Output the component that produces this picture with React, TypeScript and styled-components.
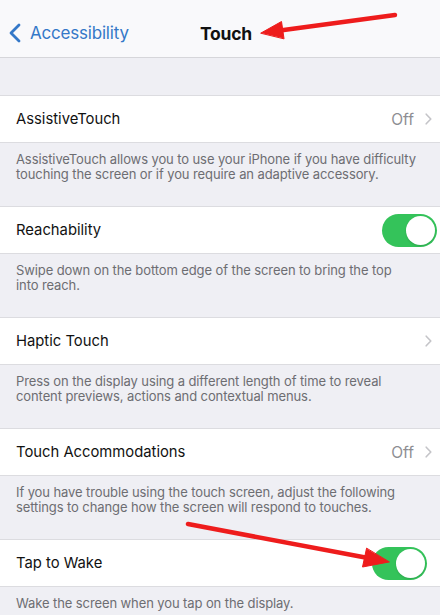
import React from "react";
import styled, { createGlobalStyle } from "styled-components";

const GlobalStyle = createGlobalStyle`
  html, body {
    margin: 0;
    padding: 0;
    background: #efeff4;
  }
  body {
    font-family: Inter, "Liberation Sans", Arial, sans-serif;
    -webkit-font-smoothing: antialiased;
  }
`;

const Screen = styled.div`
  position: relative;
  width: 440px;
  height: 615px;
  overflow: hidden;
  background: #efeff4;
`;

const NavBar = styled.header`
  box-sizing: border-box;
  display: grid;
  grid-template-columns: 1fr auto 1fr;
  align-items: center;
  height: 58px;
  padding-top: 9px;
  background: #f9f9fb;
  border-bottom: 1px solid #d6d6da;
`;

const BackButton = styled.div`
  display: flex;
  align-items: center;
  gap: 9px;
  padding-left: 8px;
  color: #3478c8;
  font-size: 17px;
  letter-spacing: -0.2px;
`;

const Title = styled.h1`
  margin: 0 0 0 12px;
  font-size: 17.5px;
  font-weight: 700;
  color: #111;
  letter-spacing: -0.2px;
`;

const Content = styled.main`
  padding-top: 37px;
`;

const Row = styled.div`
  display: flex;
  align-items: center;
  height: 46px;
  padding-left: 16px;
  background: #fff;
  border-top: 1px solid #dcdce0;
  border-bottom: 1px solid #dcdce0;
`;

const Label = styled.span`
  flex: 1;
  font-size: 14.8px;
  color: #111;
`;

const Detail = styled.span`
  display: flex;
  align-items: center;
  gap: 11px;
  padding-right: 8px;
  font-size: 15.5px;
  color: #8e8e93;
`;

const Footer = styled.p`
  box-sizing: border-box;
  height: 63px;
  margin: 0;
  padding: 9px 23px 0 16px;
  font-size: 13px;
  line-height: 15px;
  letter-spacing: -0.1px;
  color: #6d6d72;
`;

const Track = styled.div<{ $inset: number }>`
  position: relative;
  width: 55px;
  height: 33px;
  margin-right: ${(p) => p.$inset}px;
  border-radius: 17px;
  background: #34c35a;
`;

const Knob = styled.div`
  position: absolute;
  top: 2px;
  right: 2px;
  width: 29px;
  height: 29px;
  border-radius: 50%;
  background: #fff;
  box-shadow: 0 1px 2px rgba(0, 0, 0, 0.15);
`;

const Overlay = styled.svg`
  position: absolute;
  inset: 0;
  pointer-events: none;
`;

const BackChevron = () => (
  <svg width="13" height="20" viewBox="0 0 13 20">
    <path
      d="M11 2 L3 10 L11 18"
      fill="none"
      stroke="#3478c8"
      strokeWidth="2.8"
      strokeLinecap="round"
      strokeLinejoin="round"
    />
  </svg>
);

const Chevron = () => (
  <svg width="7" height="12" viewBox="0 0 7 12">
    <path
      d="M1.2 1.2 L5.8 6 L1.2 10.8"
      fill="none"
      stroke="#c4c4c8"
      strokeWidth="1.6"
      strokeLinecap="round"
      strokeLinejoin="round"
    />
  </svg>
);

const Toggle = ({ inset }: { inset: number }) => (
  <Track $inset={inset}>
    <Knob />
  </Track>
);

type Setting = {
  label: string;
  footer: string;
  value?: string;
  toggle?: number;
};

const settings: Setting[] = [
  {
    label: "AssistiveTouch",
    value: "Off",
    footer:
      "AssistiveTouch allows you to use your iPhone if you have difficulty touching the screen or if you require an adaptive accessory.",
  },
  {
    label: "Reachability",
    toggle: 3,
    footer:
      "Swipe down on the bottom edge of the screen to bring the top into reach.",
  },
  {
    label: "Haptic Touch",
    value: "",
    footer:
      "Press on the display using a different length of time to reveal content previews, actions and contextual menus.",
  },
  {
    label: "Touch Accommodations",
    value: "Off",
    footer:
      "If you have trouble using the touch screen, adjust the following settings to change how the screen will respond to touches.",
  },
  {
    label: "Tap to Wake",
    toggle: 13,
    footer: "Wake the screen when you tap on the display.",
  },
];

const App = () => {
  return (
    <Screen>
      <GlobalStyle />
      <NavBar>
        <BackButton>
          <BackChevron />
          Accessibility
        </BackButton>
        <Title>Touch</Title>
        <span />
      </NavBar>

      <Content>
        {settings.map((s) => (
          <section key={s.label}>
            <Row>
              <Label>{s.label}</Label>
              {s.toggle !== undefined ? (
                <Toggle inset={s.toggle} />
              ) : (
                <Detail>
                  {s.value}
                  <Chevron />
                </Detail>
              )}
            </Row>
            <Footer>{s.footer}</Footer>
          </section>
        ))}
      </Content>

      {/* red callout arrows */}
      <Overlay width="440" height="615" viewBox="0 0 440 615">
        <g fill="#ee1c1c" stroke="#ee1c1c" strokeLinecap="round">
          <line x1="395" y1="15" x2="280" y2="30.5" strokeWidth="4.5" />
          <polygon points="261,33 281.5,21.5 284,38.5" strokeWidth="1" strokeLinejoin="round" />
          <line x1="188" y1="524" x2="368" y2="558" strokeWidth="4.5" />
          <polygon points="389,562 362.5,567 366.5,548.5" strokeWidth="1" strokeLinejoin="round" />
        </g>
      </Overlay>
    </Screen>
  );
};

export default App;
